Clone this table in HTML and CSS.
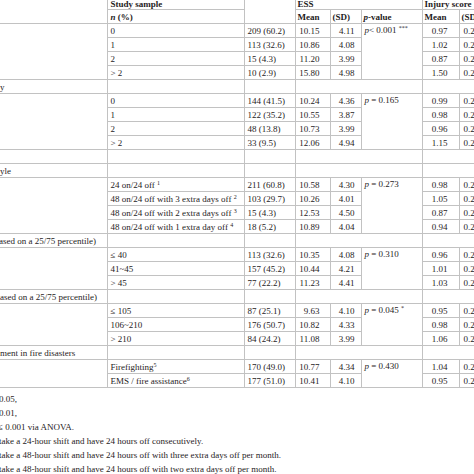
FILE: index.html
```html
<!DOCTYPE html>
<html>
<head>
<meta charset="utf-8">
<link rel="stylesheet" href="styles.css">
</head>
<body>
<div class="page">
<table class="tbl">
<colgroup>
<col class="w1"><col class="w2"><col class="w3"><col class="w4"><col class="w5"><col class="w6"><col class="w7"><col class="w8">
</colgroup>
<thead>
<tr class="hr1"><th rowspan="2" class="c"></th><th class="t">Study sample</th><th rowspan="2"></th><th colspan="3" class="hl">ESS</th><th colspan="2" class="hl">Injury score</th></tr>
<tr class="hr2"><th class="t"><i>n</i> (%)</th><th class="hl">Mean</th><th class="hl">(SD)</th><th class="hl"><i>p</i>-value</th><th class="hl">Mean</th><th class="hl">(SD)</th></tr>
</thead>
<tbody>
<tr><td rowspan="4" class="c"></td><td class="t">0</td><td class="n">209 (60.2)</td><td class="m">10.15</td><td class="s">4.11</td><td rowspan="4" class="p"><i>p</i>&lt; 0.001 <sup>***</sup></td><td class="im">0.97</td><td class="is">0.2</td></tr>
<tr><td class="t">1</td><td class="n">113 (32.6)</td><td class="m">10.86</td><td class="s">4.08</td><td class="im">1.02</td><td class="is">0.2</td></tr>
<tr><td class="t">2</td><td class="n">15 (4.3)</td><td class="m">11.20</td><td class="s">3.99</td><td class="im">0.87</td><td class="is">0.2</td></tr>
<tr><td class="t">&gt; 2</td><td class="n">10 (2.9)</td><td class="m">15.80</td><td class="s">4.98</td><td class="im">1.50</td><td class="is">0.2</td></tr>

<tr><td class="c">y</td><td></td><td></td><td colspan="3"></td><td colspan="2"></td></tr>
<tr><td rowspan="4" class="c"></td><td class="t">0</td><td class="n">144 (41.5)</td><td class="m">10.24</td><td class="s">4.36</td><td rowspan="4" class="p"><i>p</i> = 0.165</td><td class="im">0.99</td><td class="is">0.2</td></tr>
<tr><td class="t">1</td><td class="n">122 (35.2)</td><td class="m">10.55</td><td class="s">3.87</td><td class="im">0.98</td><td class="is">0.2</td></tr>
<tr><td class="t">2</td><td class="n">48 (13.8)</td><td class="m">10.73</td><td class="s">3.99</td><td class="im">0.96</td><td class="is">0.2</td></tr>
<tr><td class="t">&gt; 2</td><td class="n">33 (9.5)</td><td class="m">12.06</td><td class="s">4.94</td><td class="im">1.15</td><td class="is">0.2</td></tr>

<tr><td class="c"></td><td></td><td></td><td colspan="3"></td><td colspan="2"></td></tr>
<tr><td class="c">yle</td><td></td><td></td><td colspan="3"></td><td colspan="2"></td></tr>
<tr><td rowspan="4" class="c"></td><td class="t">24 on/24 off <sup>1</sup></td><td class="n">211 (60.8)</td><td class="m">10.58</td><td class="s">4.30</td><td rowspan="4" class="p"><i>p</i> = 0.273</td><td class="im">0.98</td><td class="is">0.2</td></tr>
<tr><td class="t">48 on/24 off with 3 extra days off <sup>2</sup></td><td class="n">103 (29.7)</td><td class="m">10.26</td><td class="s">4.01</td><td class="im">1.05</td><td class="is">0.2</td></tr>
<tr><td class="t">48 on/24 off with 2 extra days off <sup>3</sup></td><td class="n">15 (4.3)</td><td class="m">12.53</td><td class="s">4.50</td><td class="im">0.87</td><td class="is">0.2</td></tr>
<tr><td class="t">48 on/24 off with 1 extra day off <sup>4</sup></td><td class="n">18 (5.2)</td><td class="m">10.89</td><td class="s">4.04</td><td class="im">0.94</td><td class="is">0.2</td></tr>

<tr><td class="c cut">ased on a 25/75 percentile)</td><td></td><td></td><td colspan="3"></td><td colspan="2"></td></tr>
<tr><td rowspan="3" class="c"></td><td class="t">&le; 40</td><td class="n">113 (32.6)</td><td class="m">10.35</td><td class="s">4.08</td><td rowspan="3" class="p"><i>p</i> = 0.310</td><td class="im">0.96</td><td class="is">0.2</td></tr>
<tr><td class="t">41~45</td><td class="n">157 (45.2)</td><td class="m">10.44</td><td class="s">4.21</td><td class="im">1.01</td><td class="is">0.2</td></tr>
<tr><td class="t">&gt; 45</td><td class="n">77 (22.2)</td><td class="m">11.23</td><td class="s">4.41</td><td class="im">1.03</td><td class="is">0.2</td></tr>

<tr><td class="c">ased on a 25/75 percentile)</td><td></td><td></td><td colspan="3"></td><td colspan="2"></td></tr>
<tr><td rowspan="3" class="c"></td><td class="t">&le; 105</td><td class="n">87 (25.1)</td><td class="m">9.63</td><td class="s">4.10</td><td rowspan="3" class="p"><i>p</i> = 0.045 <sup>*</sup></td><td class="im">0.95</td><td class="is">0.2</td></tr>
<tr><td class="t">106~210</td><td class="n">176 (50.7)</td><td class="m">10.82</td><td class="s">4.33</td><td class="im">0.98</td><td class="is">0.2</td></tr>
<tr><td class="t">&gt; 210</td><td class="n">84 (24.2)</td><td class="m">11.08</td><td class="s">3.99</td><td class="im">1.06</td><td class="is">0.2</td></tr>

<tr><td class="c">ment in fire disasters</td><td></td><td></td><td colspan="3"></td><td colspan="2"></td></tr>
<tr><td rowspan="2" class="c"></td><td class="t">Firefighting<sup>5</sup></td><td class="n">170 (49.0)</td><td class="m">10.77</td><td class="s">4.34</td><td rowspan="2" class="p"><i>p</i> = 0.430</td><td class="im">1.04</td><td class="is">0.2</td></tr>
<tr><td class="t">EMS / fire assistance<sup>6</sup></td><td class="n">177 (51.0)</td><td class="m">10.41</td><td class="s">4.10</td><td class="im">0.95</td><td class="is">0.2</td></tr>
</tbody>
</table>
<div class="notes">
<p class="n1">0.05,</p>
<p class="n1">0.01,</p>
<p class="n2">&le; 0.001 via ANOVA.</p>
<p class="n3">take a 24-hour shift and have 24 hours off consecutively.</p>
<p class="n3">take a 48-hour shift and have 24 hours off with three extra days off per month.</p>
<p class="n3">take a 48-hour shift and have 24 hours off with two extra days off per month.</p>
</div>
</div>
</body>
</html>
```
FILE: styles.css
```css
html, body {
  margin: 0;
  padding: 0;
  background: #ffffff;
}
.page {
  width: 474px;
  height: 474px;
  overflow: hidden;
  font-family: "Liberation Serif", "Times New Roman", serif;
  color: #1f1c1d;
  font-size: 9px;
}
.tbl {
  border-collapse: collapse;
  table-layout: fixed;
  width: 500px;
  font-size: 9px;
}
.w1 { width: 107px; }
.w2 { width: 137px; }
.w3 { width: 51px; }
.w4 { width: 35px; }
.w5 { width: 31px; }
.w6 { width: 61px; }
.w7 { width: 37px; }
.w8 { width: 41px; }
.tbl tr {
  height: 14px;
}
.tbl th, .tbl td {
  border: 1px solid #c2c2c2;
  padding: 0 3px;
  line-height: 12px;
  white-space: nowrap;
  overflow: hidden;
  text-align: left;
  vertical-align: middle;
}
.tbl th {
  font-weight: bold;
}
.tbl .hr1 {
  height: 9px;
}
.tbl .hr1 th {
  border-top: none;
  line-height: 9px;
  vertical-align: bottom;
}
.tbl th.hl {
  padding-left: 2px;
}
.tbl .c {
  border-left: none;
  padding-left: 0;
}
.tbl .cut {
  text-indent: -1px;
}
.tbl .n { padding-left: 3px; }
.tbl .m { text-align: right; padding-right: 10px; }
.tbl .s { text-align: right; padding-right: 6px; }
.tbl .im { text-align: right; padding-right: 11px; }
.tbl .is { padding-left: 4px; }
.tbl .p {
  vertical-align: top;
  padding-left: 3px;
}
sup {
  font-size: 6px;
  line-height: 0;
  vertical-align: 3px;
}
.notes {
  margin-top: 4px;
}
.notes p {
  margin: 0;
  line-height: 14px;
  white-space: nowrap;
}
.notes .n1 { text-indent: -1px; }
.notes .n2 { text-indent: -2px; }
.notes .n3 { text-indent: -1px; }
```
